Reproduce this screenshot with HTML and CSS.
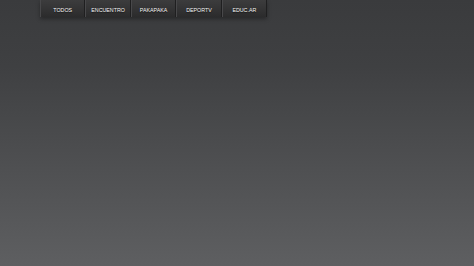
FILE: index.html
```html
<!DOCTYPE html>
<html lang="es">
<head>
    <meta charset="UTF-8">
    <title>Canales</title>
    <link rel="stylesheet" href="styles.css">
</head>
<body>
    <nav class="tabs">
        <a href="#" class="tab">TODOS</a>
        <a href="#" class="tab">ENCUENTRO</a>
        <a href="#" class="tab">PAKAPAKA</a>
        <a href="#" class="tab">DEPORTV</a>
        <a href="#" class="tab">EDUC.AR</a>
    </nav>
</body>
</html>
```

FILE: styles.css
```css
* {
    margin: 0;
    padding: 0;
    box-sizing: border-box;
}

html, body {
    height: 100%;
}

body {
    background: linear-gradient(to bottom, #3a3b3d 0%, #3f4042 25%, #5e5f61 100%);
    font-family: "Liberation Sans", Arial, sans-serif;
    padding-left: 40px;
}

.tabs {
    display: flex;
    width: 227px;
    height: 17px;
    box-shadow: 0 2px 4px rgba(0, 0, 0, 0.35);
}

.tab {
    flex: 1;
    display: flex;
    align-items: center;
    justify-content: center;
    padding-top: 3px;
    color: #f6f6f6;
    font-size: 5.3px;
    text-decoration: none;
    background: linear-gradient(to bottom, #3c3c3d 0%, #343435 50%, #2b2b2c 100%);
    border-left: 1px solid #48484a;
    border-right: 1px solid #1f1f20;
    text-shadow: 0 1px 1px rgba(0, 0, 0, 0.6);
}
```
